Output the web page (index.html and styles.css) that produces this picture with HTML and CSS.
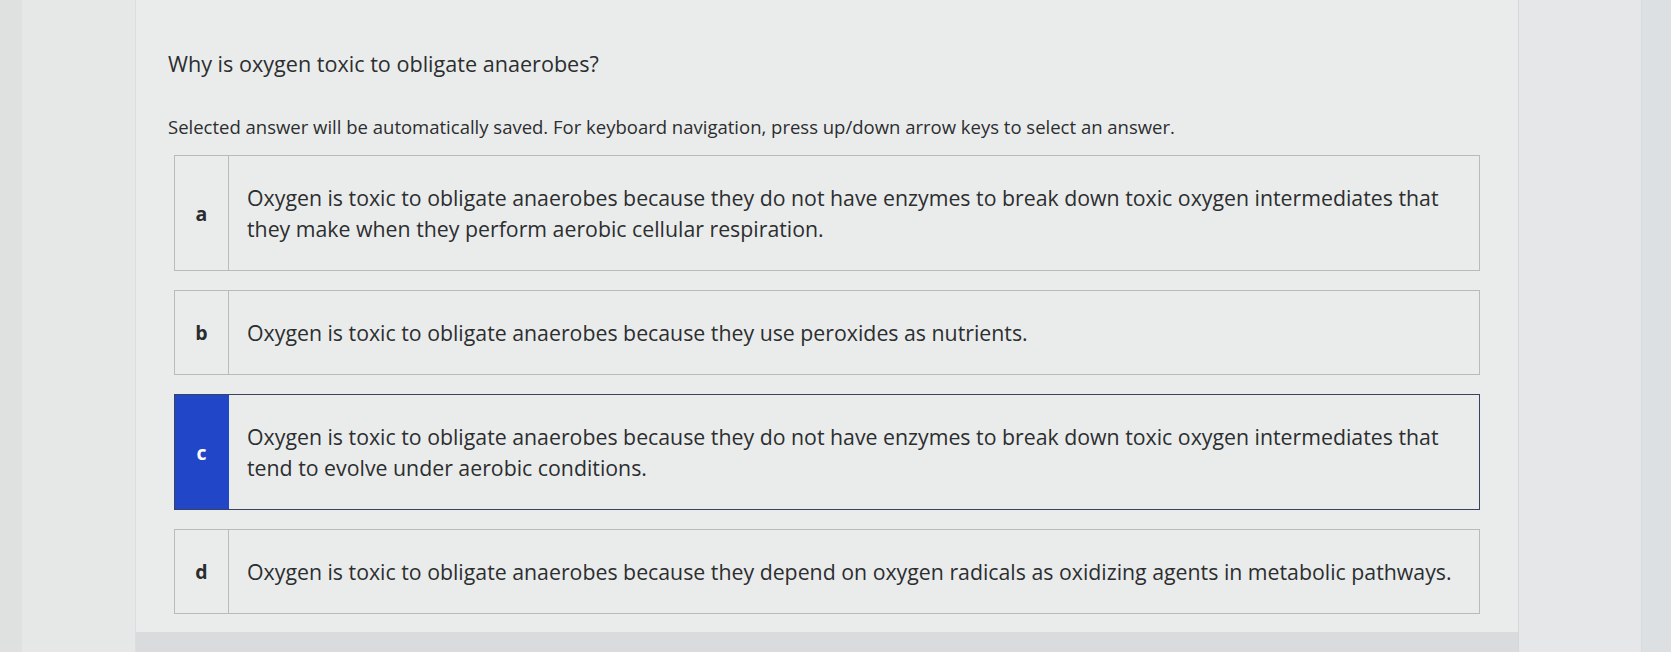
FILE: index.html
```html
<!DOCTYPE html>
<html lang="en">
<head>
<meta charset="utf-8">
<title>Question</title>
<link rel="stylesheet" href="styles.css">
</head>
<body>
<div class="page">
  <div class="rail"></div>
  <div class="side"></div>
  <main class="panel">
    <div class="panel-body">
      <h1 class="question">Why is oxygen toxic to obligate anaerobes?</h1>
      <p class="hint">Selected answer will be automatically saved. For keyboard navigation, press up/down arrow keys to select an answer.</p>
      <div class="options" role="radiogroup">
        <div class="option" role="radio" aria-checked="false">
          <div class="letter">a</div>
          <div class="text">Oxygen is toxic to obligate anaerobes because they do not have enzymes to break down toxic oxygen intermediates that they make when they perform aerobic cellular respiration.</div>
        </div>
        <div class="option" role="radio" aria-checked="false">
          <div class="letter">b</div>
          <div class="text">Oxygen is toxic to obligate anaerobes because they use peroxides as nutrients.</div>
        </div>
        <div class="option selected" role="radio" aria-checked="true">
          <div class="letter">c</div>
          <div class="text">Oxygen is toxic to obligate anaerobes because they do not have enzymes to break down toxic oxygen intermediates that tend to evolve under aerobic conditions.</div>
        </div>
        <div class="option" role="radio" aria-checked="false">
          <div class="letter">d</div>
          <div class="text">Oxygen is toxic to obligate anaerobes because they depend on oxygen radicals as oxidizing agents in metabolic pathways.</div>
        </div>
      </div>
    </div>
    <div class="panel-foot"></div>
  </main>
  <div class="strip"></div>
  <div class="edge"></div>
</div>
</body>
</html>
```
FILE: styles.css
```css
* { box-sizing: border-box; }
html, body { margin: 0; padding: 0; }
body {
  font-family: "Open Sans", "Noto Sans", "Liberation Sans", sans-serif;
  color: #2f3133;
  background: #e3e5e5;
}
.page {
  display: flex;
  width: 1671px;
  height: 652px;
  overflow: hidden;
}
.rail { width: 22px; background: #dfe1e1; }
.side { width: 114px; background: #e6e8e8; border-right: 1px solid #dcdede; }
.panel {
  width: 1382px;
  display: flex;
  flex-direction: column;
  background: #eaecec;
}
.panel-body {
  flex: 1;
  padding: 49px 0 0 32px;
}
.panel-foot { height: 20px; background: #d9dbdc; }
.strip { width: 124px; background: #e5e7e8; border-left: 1px solid #d5d8da; border-right: 1px solid #d7dadc; }
.edge { flex: 1; background: #dde0e2; }

.question {
  margin: 0;
  font-size: 21.6px;
  font-weight: 400;
  line-height: 30px;
  color: #2c2e30;
}
.hint {
  margin: 35px 0 0;
  font-size: 18.5px;
  line-height: 26px;
  color: #2c2e30;
}
.options {
  margin: 15px 0 0 6px;
  width: 1306px;
  display: flex;
  flex-direction: column;
  gap: 19px;
}
.option {
  display: flex;
  border: 1px solid #b7bbbd;
  background: #eaecec;
}
.letter {
  width: 54px;
  flex: none;
  display: flex;
  align-items: center;
  justify-content: center;
  border-right: 1px solid #b7bbbd;
  font-weight: 700;
  font-size: 19.5px;
  color: #2a2c2e;
}
.text {
  flex: 1;
  padding: 26px 22px 26px 18px;
  font-size: 21.3px;
  line-height: 31px;
  color: #2c2e30;
}
.option.selected { border-color: #39435f; }
.option.selected .letter {
  background: #2147c8;
  border-right-color: #2147c8;
  color: #ffffff;
}
```
